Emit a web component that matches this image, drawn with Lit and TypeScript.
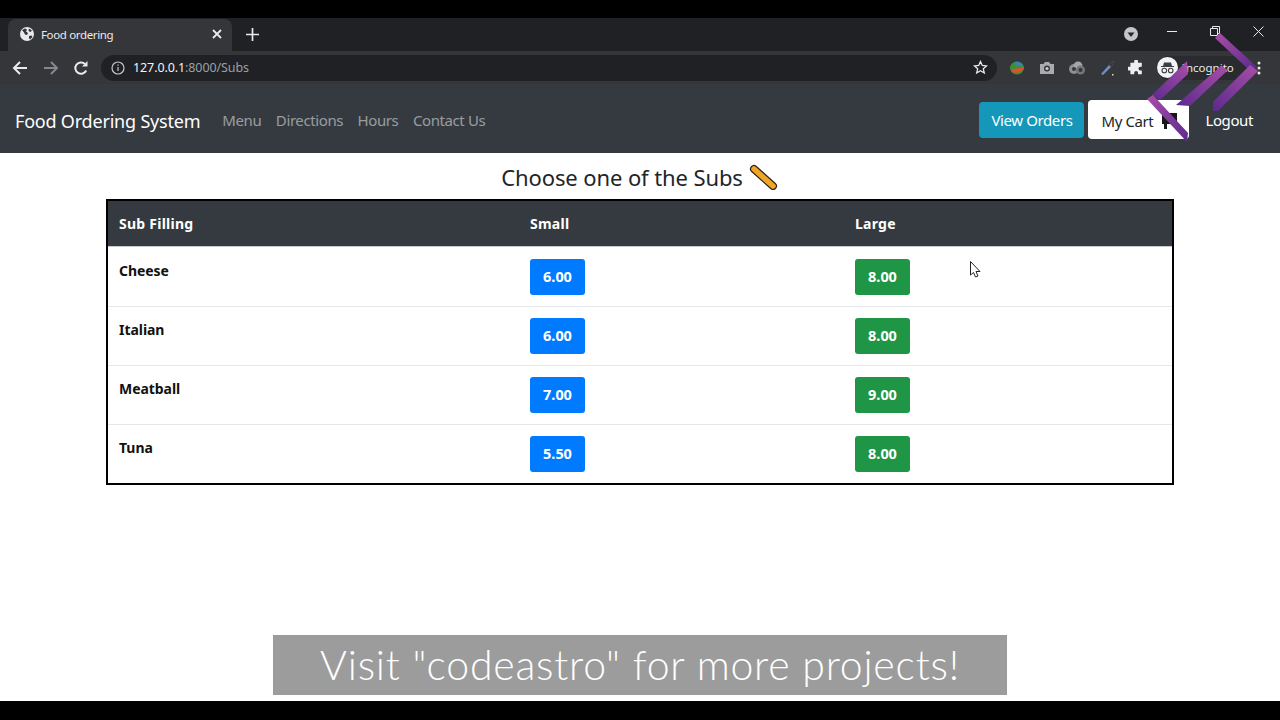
import { LitElement, html, css, svg } from "lit";
import { customElement } from "lit/decorators.js";

const rows = [
  ["Cheese", "6.00", "8.00"],
  ["Italian", "6.00", "8.00"],
  ["Meatball", "7.00", "9.00"],
  ["Tuna", "5.50", "8.00"],
];

@customElement("app-root")
export class AppRoot extends LitElement {
  static styles = css`
    :host { display: block; width: 1280px; height: 720px; position: relative; overflow: hidden; background: #000; font-family: "Noto Sans", "Open Sans", sans-serif; }
    .page { display: flex; flex-direction: column; height: 720px; padding: 18px 0 19px; box-sizing: border-box; }
    .tabstrip { height: 33px; background: #202124; display: flex; align-items: flex-end; flex: none; position: relative; }
    .tab { width: 224px; height: 32px; margin-left: 8px; background: #35363a; border-radius: 8px 8px 0 0; display: flex; align-items: center; padding: 0 10px 2px 12px; box-sizing: border-box; color: #e8eaed; font-size: 11.5px; letter-spacing: -0.35px; }
    .tab .globe { margin-right: 7px; flex: none; }
    .tab .title { flex: 1; }
    .newtab { margin: 0 0 10px 14px; flex: none; display: block; }
    .spring { flex: 1; }
    .drop { margin: 0 142px 10px 0; display: block; }
    .winctl { position: absolute; top: 8px; display: block; }
    .min { left: 1167px; } .rest { left: 1210px; } .close { left: 1253px; }
    .toolbar { height: 33px; background: #35363a; display: flex; align-items: center; flex: none; }
    .navicon { display: block; flex: none; }
    .nav-back { margin-left: 12px; } .nav-fwd { margin-left: 15px; } .nav-reload { margin-left: 14px; }
    .omni { width: 896px; height: 26px; margin-left: 12px; flex: none; background: #202124; border-radius: 13px; display: flex; align-items: center; box-sizing: border-box; padding: 0 9px 0 10px; font-size: 12.5px; color: #9aa0a6; letter-spacing: -0.1px; }
    .omni .host { color: #f1f3f4; }
    .omni .info { margin-right: 8px; flex: none; }
    .omni .star { margin-left: auto; flex: none; }
    .exts { display: flex; align-items: center; flex: none; margin-left: 11px; gap: 13px; }
    .profile { margin-left: 13px; width: 90px; height: 24px; border-radius: 12px; background: #2a2b2e; display: flex; align-items: center; color: #e8eaed; font-size: 11.5px; flex: none; }
    .profile span { margin-left: 4px; }
    .avatar { display: block; flex: none; }
    .dots { margin-left: 10px; flex: none; display: block; }
    .navbar { height: 69px; background: #343a40; display: flex; align-items: center; padding: 0 27px 0 15px; flex: none; }
    .brand { color: #fff; font-size: 18px; letter-spacing: -0.2px; margin-right: 14.750px; padding-top: 4px; }
    .link { color: rgba(255,255,255,.5); font-size: 15px; letter-spacing: -0.4px; padding: 2px 7.250px 0; }
    .nav-spring { flex: 1; }
    .btn-orders { background: #1497b8; color: #fff; font-size: 15px; letter-spacing: -0.4px; width: 105px; height: 36px; border-radius: 4px; display: flex; align-items: center; justify-content: center; margin-top: 3px; }
    .btn-cart { background: #fff; color: #212529; font-size: 15px; letter-spacing: -0.4px; width: 101px; height: 39px; margin-left: 4px; border-radius: 4px; display: flex; align-items: center; box-sizing: border-box; padding: 3px 0 0 13px; margin-top: 1px; }
    .cart-ic { margin-left: 9px; display: block; flex: none; }
    .logout { color: #fff; font-size: 15px; letter-spacing: -0.4px; margin-left: 16px; padding-top: 3px; }
    main { flex: 1; background: #fff; padding: 0 106px; display: flex; flex-direction: column; }
    h1 { margin: 0; height: 46px; display: flex; align-items: center; justify-content: center; font-size: 22px; font-weight: 400; color: #212529; letter-spacing: -0.1px; padding-top: 1px; box-sizing: border-box; }
    h1 svg { margin-left: 6px; display: block; }
    table { width: 1068px; border: 2px solid #000; border-collapse: separate; border-spacing: 0; table-layout: fixed; box-sizing: border-box; font-size: 14px; color: #111; }
    th { background: #343a40; color: #fff; text-align: left; font-weight: 700; height: 46px; padding: 0 12px 0 11px; border-bottom: 1px solid #c8cbce; letter-spacing: 0.25px; box-sizing: border-box; }
    td { padding: 11px 12px 11px 11px; vertical-align: top; border-top: 1px solid #e4e7ea; box-sizing: border-box; font-weight: 700; letter-spacing: -0.05px; line-height: 23px; }
    tr:first-child td { border-top: 0; padding-top: 12px; }
    .c1 { width: 411px; } .c2 { width: 325px; }
    .price { width: 55px; height: 36px; border-radius: 3px; color: #fff; display: flex; align-items: center; justify-content: center; font-size: 14.500px; box-sizing: border-box; padding-bottom: 2px; }
    .blue { background: #007bff; } .green { background: #1f9645; }
    .caption { position: absolute; left: 273px; top: 635px; width: 734px; height: 60px; background: #9c9c9c; color: #fff; display: flex; align-items: center; justify-content: center; font-family: Lato, "Open Sans", sans-serif; font-size: 41px; font-weight: 300; letter-spacing: .78px; padding-bottom: 2px; box-sizing: border-box; }
    .logo, .cursor { position: absolute; display: block; }
    .logo { left: 1140px; top: 25px; }
    .cursor { left: 969px; top: 260px; }
  `;

  private navIcons() {
    return html`
      <svg class="navicon nav-back" width="16" height="16" viewBox="0 0 16 16" fill="none" stroke="#e8eaed" stroke-width="2"><path d="M15 8H2M8 2L2 8l6 6"/></svg>
      <svg class="navicon nav-fwd" width="16" height="16" viewBox="0 0 16 16" fill="none" stroke="#85888c" stroke-width="2"><path d="M1 8h13M8 2l6 6-6 6"/></svg>
      <svg class="navicon nav-reload" width="16" height="16" viewBox="0 0 16 16" fill="none" stroke="#e8eaed" stroke-width="2"><path d="M13.2 10.5A5.7 5.7 0 1 1 12 4"/><path d="M14.5 1v5.5H9" fill="#e8eaed" stroke="none"/></svg>`;
  }

  private exts() {
    return html`<div class="exts">
      <svg width="18" height="16" viewBox="0 0 18 16"><ellipse cx="9" cy="8" rx="7" ry="6.5" fill="#3f8f3a"/><path d="M3 11c3-4 8-2 13-4l-1 3c-4 3-9 4-12 1z" fill="#d8522f"/><path d="M7 2c3-1 6 0 8 3L9 6z" fill="#3b7fc4"/></svg>
      <svg width="16" height="14" viewBox="0 0 16 14"><path d="M1 3h3.5L6 1h4l1.500 2H15v10H1z" fill="#a9abae"/><circle cx="8" cy="7.500" r="3" fill="#35363a"/><circle cx="8" cy="7.500" r="1.600" fill="#c9cacc"/></svg>
      <svg width="18" height="14" viewBox="0 0 18 14"><circle cx="6" cy="8" r="5" fill="#8d8f92"/><circle cx="10" cy="5" r="4.500" fill="#a4a6a9"/><circle cx="12.500" cy="9" r="4.500" fill="#74767a"/><circle cx="12.500" cy="9" r="2" fill="#35363a"/><circle cx="6" cy="8" r="2" fill="#35363a"/></svg>
      <svg width="16" height="16" viewBox="0 0 16 16"><path d="M2 14l8-9 2 2-8 8z" fill="#6d8fc4"/><path d="M10 5l4-4 1 1-3 5z" fill="#33353a" stroke="#55585c" stroke-width=".6"/><rect x="13" y="14" width="1.500" height="1.500" fill="#ddd"/></svg>
      <svg width="16" height="16" viewBox="0 0 16 16"><path d="M6 1.500a2 2 0 0 1 4 0V3h4v4h-1.500a2 2 0 0 0 0 4H14v4h-4v-1.500a2 2 0 0 0-4 0V15H2v-4H.5a2 2 0 0 1 0-4H2V3h4z" fill="#eceef0" transform="translate(.5 0) scale(.95)"/></svg>
    </div>`;
  }

  private avatar() {
    return svg`<svg class="avatar" width="21" height="21" viewBox="0 0 21 21"><circle cx="10.500" cy="10.500" r="10.500" fill="#f1f3f4"/><path d="M7 5.500h7l1 3.500h2v1H4V9h2z" fill="#3c4043"/><circle cx="7.300" cy="13.500" r="2.300" fill="none" stroke="#3c4043" stroke-width="1.100"/><circle cx="13.700" cy="13.500" r="2.300" fill="none" stroke="#3c4043" stroke-width="1.100"/></svg>`;
  }

  render() {
    return html`
      <div class="page">
        <div class="tabstrip">
          <div class="tab">
            <svg class="globe" width="14" height="14" viewBox="0 0 14 14"><circle cx="7" cy="7" r="7" fill="#e8eaed"/><path d="M2 3l3-1.500 2 1-1 2 2 1.500-1 2-2-.5-1-2zM9 9l2.500-.5 1 1.500-2.500 2.500-1-1.500zM9 1.500l3 2-1.500 1.500-2-1z" fill="#35363a"/></svg>
            <span class="title">Food ordering</span>
            <svg width="10" height="10" viewBox="0 0 10 10" stroke="#e8eaed" stroke-width="1.800"><path d="M1 1l8 8M9 1l-8 8"/></svg>
          </div>
          <svg class="newtab" width="13" height="13" viewBox="0 0 13 13" stroke="#e8eaed" stroke-width="1.700"><path d="M6.500 0v13M0 6.500h13"/></svg>
          <div class="spring"></div>
          <svg class="drop" width="14" height="14" viewBox="0 0 14 14"><circle cx="7" cy="7" r="7" fill="#c4c6c9"/><path d="M3.500 5.500h7L7 10z" fill="#26272a"/></svg>
          <svg class="winctl min" width="10" height="10" viewBox="0 0 10 10" stroke="#e8eaed"><path d="M0 5.500h10"/></svg>
          <svg class="winctl rest" width="10" height="10" viewBox="0 0 10 10" fill="none" stroke="#e8eaed"><path d="M.5 2.500h7v7h-7zM2.500 2.500v-2h7v7h-2"/></svg>
          <svg class="winctl close" width="11" height="11" viewBox="0 0 11 11" stroke="#e8eaed"><path d="M.5.500l10 10M10.500.500l-10 10"/></svg>
        </div>
        <div class="toolbar">
          ${this.navIcons()}
          <div class="omni">
            <svg class="info" width="14" height="14" viewBox="0 0 14 14" fill="none" stroke="#c4c7ca" stroke-width="1.200"><circle cx="7" cy="7" r="6"/><path d="M7 6v4M7 3.500v1.300"/></svg>
            <span><span class="host">127.0.0.1</span>:8000/Subs</span>
            <svg class="star" width="15" height="15" viewBox="0 0 15 15" fill="none" stroke="#e8eaed" stroke-width="1.300"><path d="M7.500 1.500l1.800 4 4.200.4-3.200 2.900 1 4.200-3.800-2.200-3.800 2.200 1-4.200L1.500 5.900l4.200-.4z"/></svg>
          </div>
          ${this.exts()}
          <div class="profile">${this.avatar()}<span>Incognito</span></div>
          <svg class="dots" width="4" height="14" viewBox="0 0 4 14" fill="#e8eaed"><circle cx="2" cy="2" r="1.500"/><circle cx="2" cy="7" r="1.500"/><circle cx="2" cy="12" r="1.500"/></svg>
        </div>
        <div class="navbar">
          <span class="brand">Food Ordering System</span>
          <span class="link">Menu</span><span class="link">Directions</span><span class="link">Hours</span><span class="link">Contact Us</span>
          <div class="nav-spring"></div>
          <div class="btn-orders">View Orders</div>
          <div class="btn-cart">My Cart
            <svg class="cart-ic" width="16" height="18" viewBox="0 0 16 18"><path d="M0 1h15v11H5v5H2v-5H0z" fill="#17181a"/></svg>
          </div>
          <span class="logout">Logout</span>
        </div>
        <main>
          <h1>Choose one of the Subs
            <svg width="30" height="26" viewBox="0 0 30 26"><path d="M5 5L24 22" stroke="#2a2320" stroke-width="8" stroke-linecap="round"/><path d="M5 5L24 22" stroke="#f0a623" stroke-width="5.600" stroke-linecap="round"/></svg>
          </h1>
          <table>
            <thead><tr><th class="c1">Sub Filling</th><th class="c2">Small</th><th>Large</th></tr></thead>
            <tbody>
              ${rows.map(r => html`<tr>
                <td>${r[0]}</td>
                <td><div class="price blue">${r[1]}</div></td>
                <td><div class="price green">${r[2]}</div></td>
              </tr>`)}
            </tbody>
          </table>
        </main>
      </div>
      <div class="caption">Visit "codeastro" for more projects!</div>
      <svg class="logo" width="125" height="125" viewBox="1140 25 125 125">
        <defs>
          <linearGradient id="g" x1="0" y1="0" x2="1" y2="1"><stop offset="0" stop-color="#a84ea8"/><stop offset="1" stop-color="#5c2a8e"/></linearGradient>
          <linearGradient id="k" x1="1" y1="0" x2="0" y2="1"><stop offset="0" stop-color="#a84ea8"/><stop offset="1" stop-color="#5c2a8e"/></linearGradient>
        </defs>
        <polygon points="1215,38 1220,33 1258,68 1247,68" fill="url(#g)"/>
        <polygon points="1250,65 1258,71 1218,111 1213,111 1213,102" fill="url(#k)"/>
        <polygon points="1221,66 1228,70 1190,106 1176,105" fill="url(#k)"/>
        <polygon points="1187,61 1188,74 1160,100 1152,95" fill="url(#k)"/>
        <polygon points="1147,99 1153,95 1188,133 1187,142" fill="url(#g)"/>
      </svg>
      <svg class="cursor" width="14" height="20" viewBox="0 0 14 20"><path d="M1.500 1.500v13.500l3-2.500 2 4.500 2.500-1-2-4.500h4z" fill="#fff" stroke="#222" stroke-width="1"/></svg>
    `;
  }
}
